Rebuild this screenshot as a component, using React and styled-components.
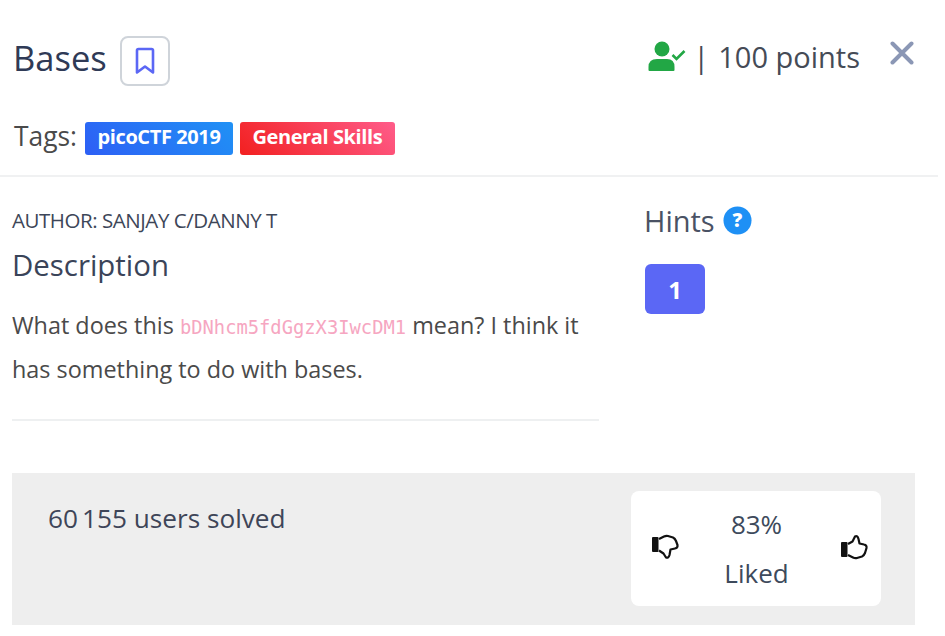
import React from "react";
import styled, { createGlobalStyle } from "styled-components";

const Global = createGlobalStyle`
  html, body { margin: 0; padding: 0; background: #fff; }
  body { font-family: "Open Sans", "Liberation Sans", sans-serif; color: #3a3f4b; }
`;

const Page = styled.div`
  width: 945px;
  height: 636px;
  overflow: hidden;
  background: #fff;
`;
const Header = styled.header`
  width: 938px;
  height: 177px;
  box-sizing: border-box;
  border-bottom: 2px solid #f0f1f2;
  padding: 36px 24px 0 13px;
  display: flex;
  flex-direction: column;
`;
const TitleRow = styled.div`
  display: flex;
  align-items: flex-start;
  height: 85px;
`;
const Title = styled.h1`
  margin: 0 13px 0 0;
  font-size: 34.5px;
  line-height: 44px;
  font-weight: 400;
  color: #2f3a56;
`;
const BookmarkButton = styled.button`
  width: 50px;
  height: 50px;
  padding: 0;
  background: #fff;
  border: 2px solid #cfd4da;
  border-radius: 8px;
  display: flex;
  align-items: center;
  justify-content: center;
`;
const Points = styled.div`
  margin-left: auto;
  display: flex;
  align-items: center;
  height: 41px;
  font-size: 29px;
  color: #454b56;
`;
const Separator = styled.span`
  margin: 0 9px 0 7px;
`;
const Close = styled.button`
  margin: 5px 0 0 30px;
  padding: 0;
  background: none;
  border: 0;
  height: 24px;
  display: flex;
`;
const TagsRow = styled.div`
  display: flex;
  align-items: center;
  height: 34px;
  font-size: 26.4px;
  color: #4a4a4a;
`;
const TagsLabel = styled.span`
  margin: -4px 8px 0 1px;
`;
const Tag = styled.span`
  height: 33px;
  padding: 0 12.5px 3px;
  box-sizing: border-box;
  margin-right: 7px;
  display: inline-flex;
  align-items: center;
  border-radius: 3px;
  color: #fff;
  font-size: 20px;
  font-weight: 700;
  letter-spacing: -0.4px;
  background: ${(p) => p.$bg};
`;
const Main = styled.main`
  display: flex;
  height: 296px;
  box-sizing: border-box;
  padding: 28px 0 0 12px;
`;
const Left = styled.section`
  width: 587px;
  height: 214px;
  border-bottom: 2px solid #eef0f1;
`;
const Author = styled.div`
  font-size: 20.5px;
  line-height: 30px;
  letter-spacing: -0.45px;
  color: #3d4658;
`;
const Subheading = styled.h2`
  margin: 11px 0 19px;
  font-size: 29.4px;
  line-height: 38px;
  font-weight: 400;
  color: #3a4459;
`;
const Paragraph = styled.p`
  margin: 0;
  font-size: 23.4px;
  line-height: 44px;
  color: #4a4a4a;
`;
const Code = styled.code`
  font-family: "DejaVu Sans Mono", "Liberation Mono", monospace;
  font-size: 18.8px;
  line-height: 1;
  color: #f6a6c1;
`;
const Right = styled.aside`
  margin-left: 45px;
  width: 200px;
`;
const HintsTitle = styled.div`
  display: flex;
  align-items: center;
  gap: 8px;
  height: 30px;
  font-size: 29px;
  color: #4a5264;
`;
const HintButton = styled.button`
  margin: 29px 0 0 1px;
  width: 60px;
  height: 50px;
  border: 0;
  border-radius: 6px;
  background: #5b67f5;
  color: #fff;
  font: 700 24px "Open Sans", sans-serif;
  display: block;
`;
const Footer = styled.footer`
  width: 903px;
  height: 152px;
  margin-left: 12px;
  box-sizing: border-box;
  background: #eeeeee;
  padding: 18px 34px 0 36px;
  display: flex;
  justify-content: space-between;
  align-items: flex-start;
`;
const Solved = styled.div`
  font-size: 26.2px;
  line-height: 54px;
  color: #3e4558;
`;
const NarrowSpace = styled.span`
  margin-left: 4px;
`;
const LikeCard = styled.div`
  width: 250px;
  height: 115px;
  box-sizing: border-box;
  background: #fff;
  border-radius: 8px;
  padding: 0 13px 0 20px;
  display: flex;
  align-items: center;
  justify-content: space-between;
`;
const LikeText = styled.div`
  text-align: center;
  font-size: 26px;
  line-height: 49px;
  color: #3d4a5c;
  margin-left: -6px;
`;
const Vote = styled.svg`
  display: block;
  margin-top: -3px;
`;

const ThumbDown = () => (
  <Vote width="28" height="26" viewBox="0 0 28 26">
    <rect x="1" y="3" width="6.5" height="15" rx="1" fill="#111" />
    <path d="M8 5 L13 2.5 Q15 1.5 17 2 L22 3.5 Q24 4.5 25 7 L26.5 11 Q27 14 24 14.5 L19.5 15.5 L18.5 21 Q17.5 24.5 15 23.5 L12.5 19.5 L8 16.5" fill="none" stroke="#111" strokeWidth="2.2" strokeLinejoin="round" />
  </Vote>
);
const ThumbUp = () => (
  <Vote width="28" height="26" viewBox="0 0 28 26">
    <rect x="1" y="8" width="6.5" height="15" rx="1" fill="#111" />
    <path d="M8 10 L12.5 7.5 L15 2.5 Q17.5 1 18.5 5 L19.5 9.5 L24 10.5 Q27 11 26.5 14 L25 19 Q24 21.5 22 22.5 L17 24 Q15 24.5 13 23.5 L8 21" fill="none" stroke="#111" strokeWidth="2.2" strokeLinejoin="round" />
  </Vote>
);

export default function App() {
  return (
    <Page>
      <Global />
      <Header>
        <TitleRow>
          <Title>Bases</Title>
          <BookmarkButton aria-label="Bookmark">
            <svg width="24" height="28" viewBox="0 0 24 28" fill="none" stroke="#5b67f5" strokeWidth="2.6" strokeLinejoin="round">
              <path d="M4 3.5 Q4 2 5.5 2 H18.5 Q20 2 20 3.5 V25.5 L12 19.5 L4 25.5 Z" />
            </svg>
          </BookmarkButton>
          <Points>
            <svg width="39" height="32" viewBox="0 0 39 32">
              <circle cx="15" cy="8" r="7.5" fill="#22a745" />
              <path d="M1.5 29 V26 Q1.5 18 10 18 H20 Q27.5 18 27.5 26 V29 Q27.5 30 26.5 30 H2.5 Q1.5 30 1.5 29 Z" fill="#22a745" />
              <path d="M25.5 14 L29.5 18 L37.5 10" fill="none" stroke="#22a745" strokeWidth="2.6" />
            </svg>
            <Separator>|</Separator>
            100 points
          </Points>
          <Close aria-label="Close">
            <svg width="24" height="24" viewBox="0 0 24 24" stroke="#8b97b5" strokeWidth="4" strokeLinecap="round">
              <path d="M2.5 2.5 L21.5 21.5 M21.5 2.5 L2.5 21.5" />
            </svg>
          </Close>
        </TitleRow>
        <TagsRow>
          <TagsLabel>Tags:</TagsLabel>
          <Tag $bg="linear-gradient(45deg, #2d5ff5, #2091f5)">picoCTF 2019</Tag>
          <Tag $bg="linear-gradient(45deg, #f22020, #ff5c8a)">General Skills</Tag>
        </TagsRow>
      </Header>
      <Main>
        <Left>
          <Author>AUTHOR: SANJAY C/DANNY T</Author>
          <Subheading>Description</Subheading>
          <Paragraph>
            What does this <Code>bDNhcm5fdGgzX3IwcDM1</Code> mean? I think it has something to do with bases.
          </Paragraph>
        </Left>
        <Right>
          <HintsTitle>
            Hints
            <svg width="29" height="29" viewBox="0 0 30 30">
              <circle cx="15" cy="15" r="14.5" fill="#1e90f5" />
              <text x="15" y="22" textAnchor="middle" fontFamily="Open Sans" fontWeight="800" fontSize="20" fill="#fff">?</text>
            </svg>
          </HintsTitle>
          <HintButton>1</HintButton>
        </Right>
      </Main>
      <Footer>
        <Solved>60<NarrowSpace>155</NarrowSpace> users solved</Solved>
        <LikeCard>
          <ThumbDown />
          <LikeText>83%<br />Liked</LikeText>
          <ThumbUp />
        </LikeCard>
      </Footer>
    </Page>
  );
}
